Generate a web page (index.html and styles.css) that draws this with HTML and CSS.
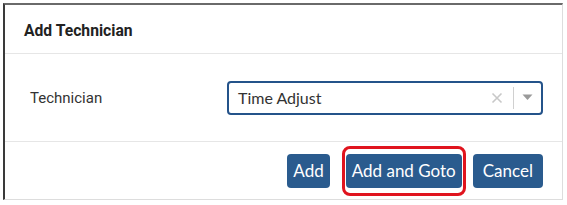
FILE: index.html
```html
<!DOCTYPE html>
<html lang="en">
  <head>
    <meta charset="UTF-8" />
    <meta name="viewport" content="width=device-width, initial-scale=1.0" />
    <title>Add Technician</title>
    <link rel="stylesheet" href="styles.css">
  </head>
  <body>
    <div class="dialog">
      <div class="header">
        <div class="title">Add Technician</div>
      </div>
      <div class="body">
        <div class="label">Technician</div>
        <div class="select">
          <div class="value">Time Adjust</div>
          <div class="clear">
            <svg width="12" height="12" viewBox="0 0 12 12">
              <path d="M1.5 1.5 L10.5 10.5 M10.5 1.5 L1.5 10.5" stroke="#c8c8c8" stroke-width="1.6" fill="none" />
            </svg>
          </div>
          <div class="sep"></div>
          <div class="arrow">
            <svg width="11" height="7" viewBox="0 0 11 7">
              <path d="M0.5 0.5 L10.5 0.5 L5.5 6 Z" fill="#9a9a9a" />
            </svg>
          </div>
        </div>
      </div>
      <div class="footer">
        <div class="btn btn-add">Add</div>
        <div class="mark">
          <div class="btn btn-goto">Add and Goto</div>
        </div>
        <div class="btn btn-cancel">Cancel</div>
      </div>
    </div>
  </body>
</html>
```

FILE: styles.css
```css
body {
  margin: 0;
  background: #ffffff;
  font-family: Roboto, "Liberation Sans", sans-serif;
  color: #333333;
}
.dialog {
  margin: 3px 4px 3px 3px;
  height: 197px;
  box-sizing: border-box;
  border-left: 2px solid #3a3a3a;
  border-top: 2px solid #6a6a6a;
  border-right: 1px solid #dddddd;
  border-bottom: 1px solid #dddddd;
  display: flex;
  flex-direction: column;
}
.header {
  height: 49px;
  display: flex;
  align-items: center;
  padding-left: 19px;
  padding-top: 2px;
  box-sizing: border-box;
  border-bottom: 1px solid #e6e6e6;
}
.title {
  font-size: 15.7px;
  font-weight: bold;
  color: #222222;
}
.body {
  height: 87px;
  display: flex;
  align-items: center;
  padding: 0 19px 0 25px;
  border-bottom: 1px solid #e6e6e6;
}
.label {
  width: 197px;
  font-size: 15px;
  color: #333333;
}
.select {
  flex: 1;
  height: 34px;
  box-sizing: border-box;
  border: 2px solid #24538a;
  border-radius: 4px;
  display: flex;
  align-items: center;
  padding-left: 9px;
  font-family: Lato, "Open Sans", sans-serif;
}
.value {
  flex: 1;
  font-size: 16px;
  color: #333333;
}
.clear {
  display: flex;
  width: 12px;
  margin-right: 10px;
}
.sep {
  width: 1px;
  height: 22px;
  background: #d0d0d0;
}
.arrow {
  display: flex;
  width: 11px;
  padding: 0 8px 0 8px;
}
.footer {
  flex: 1;
  display: flex;
  align-items: center;
  justify-content: flex-end;
  padding-right: 19px;
}
.btn {
  height: 34px;
  box-sizing: border-box;
  padding: 0 8px;
  display: flex;
  align-items: center;
  background: #2a5b8e;
  color: #ffffff;
  border-radius: 4px;
  font-family: Lato, "Open Sans", sans-serif;
  font-size: 17px;
}
.btn-add {
  padding: 0 6px;
}
.btn-goto {
  padding: 0 6px;
}
.btn-cancel {
  padding: 0 10px;
}
.mark {
  display: flex;
  padding: 5px 1px;
  border: 3px solid #e0141e;
  border-radius: 8px;
  margin: 0 7px 0 12px;
}
```
